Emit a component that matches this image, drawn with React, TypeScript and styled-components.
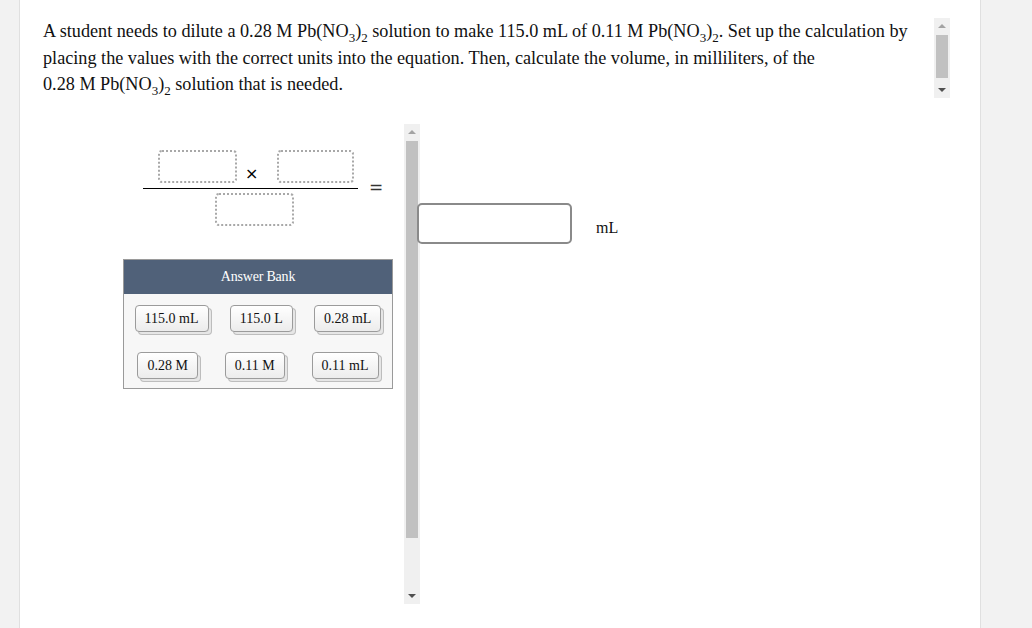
import React from 'react'
import styled, { createGlobalStyle } from 'styled-components'

const GlobalStyle = createGlobalStyle`
  html, body {
    margin: 0;
    padding: 0;
    background: #f2f2f2;
  }
  body {
    font-family: "Liberation Serif", "Times New Roman", serif;
    color: #111;
  }
`

const Page = styled.div`
  display: flex;
  width: 1032px;
  height: 628px;
  overflow: hidden;
`

const Gutter = styled.div<{ $side: 'left' | 'right' }>`
  background: #f2f2f2;
  width: ${p => (p.$side === 'left' ? '19px' : '51px')};
  border-${p => (p.$side === 'left' ? 'right' : 'left')}: 1px solid #e0e0e0;
  flex-shrink: 0;
`

const Main = styled.div`
  width: 960px;
  background: #fff;
  flex-shrink: 0;
`

const PromptRow = styled.div`
  display: flex;
  padding: 18px 0 0 23px;
`

const Prompt = styled.div`
  width: 891px;
  font-size: 18.2px;
  line-height: 26.5px;
  color: #111;

  sub {
    font-size: 13px;
    line-height: 0;
    vertical-align: -5px;
  }
`

const ScrollTrack = styled.div<{ $height: number }>`
  width: 16px;
  height: ${p => p.$height}px;
  background: #f0f0f0;
  display: flex;
  flex-direction: column;
  align-items: center;
  flex-shrink: 0;

  &::before {
    content: '';
    margin-top: 6px;
    border-left: 4px solid transparent;
    border-right: 4px solid transparent;
    border-bottom: 4px solid #a3a3a3;
  }
`

const Thumb = styled.div<{ $top: number; $height: number }>`
  width: 12px;
  margin-top: ${p => p.$top}px;
  height: ${p => p.$height}px;
  background: #c1c1c1;
`

const DownArrow = styled.div`
  margin-top: auto;
  margin-bottom: 6px;
  border-left: 4px solid transparent;
  border-right: 4px solid transparent;
  border-top: 4px solid #505050;
`

const WorkArea = styled.div`
  display: flex;
  margin-top: 26px;
`

const LeftColumn = styled.div`
  width: 270px;
  margin-left: 103px;
  margin-right: 11px;
`

const EquationRow = styled.div`
  display: flex;
  align-items: center;
  padding-top: 26px;
`

const Fraction = styled.div`
  width: 215px;
  margin-left: 20px;
  display: flex;
  flex-direction: column;
  align-items: center;
`

const Numerator = styled.div`
  display: flex;
  align-items: flex-end;
  padding-left: 15px;
  padding-bottom: 5px;
  align-self: stretch;
`

const FractionLine = styled.div`
  align-self: stretch;
  height: 1px;
  background: #000;
`

const Denominator = styled.div`
  padding-top: 4px;
  padding-left: 8px;
`

const DropSlot = styled.div<{ $w: number }>`
  width: ${p => p.$w}px;
  height: 29px;
  border: 2px dotted #a8a8a8;
  border-radius: 4px;
`

const Times = styled.span`
  font-family: "DejaVu Sans", sans-serif;
  font-size: 16px;
  line-height: 15px;
  color: #000;
  margin: 0 19px 0 8px;
  padding-bottom: 2px;
`

const Equals = styled.span`
  font-family: "DejaVu Sans", sans-serif;
  font-size: 17px;
  color: #333;
  margin-left: 11px;
  margin-top: -3px;
`

const Bank = styled.div`
  margin-top: 33px;
  border: 1px solid #9a9a9a;
  background: #f7f7f7;
`

const BankHeader = styled.div`
  height: 34px;
  background: #506179;
  color: #fff;
  font-size: 14px;
  letter-spacing: -0.2px;
  display: flex;
  align-items: center;
  justify-content: center;
`

const BankBody = styled.div`
  display: flex;
  flex-direction: column;
  gap: 20px;
  padding: 11px 0 9px;
`

const BankRow = styled.div`
  display: flex;
  justify-content: space-around;
`

const Chip = styled.div`
  height: 25px;
  padding: 0 9px;
  font-size: 14px;
  display: flex;
  align-items: center;
  border: 1px solid #9b9b9b;
  border-radius: 4px;
  background: linear-gradient(#ffffff, #ececec);
  box-shadow: 3px 3px 0 -1px #e6e6e6, 3px 3px 0 0 #bdbdbd;
  color: #111;
`

const AnswerArea = styled.div`
  display: flex;
  align-items: center;
  margin-top: 79px;
  align-self: flex-start;
`

const AnswerInput = styled.div`
  width: 151px;
  height: 37px;
  margin-left: -3px;
  border: 2px solid #8a8a8a;
  border-radius: 5px;
  background: #fff;
`

const Unit = styled.span`
  font-size: 16px;
  margin-left: 24px;
  padding-top: 9px;
`

const Chem = () => (
  <>
    Pb(NO<sub>3</sub>)<sub>2</sub>
  </>
)

const rows = [
  ['115.0 mL', '115.0 L', '0.28 mL'],
  ['0.28 M', '0.11 M', '0.11 mL'],
]

export default function App() {
  return (
    <>
      <GlobalStyle />
      <Page>
        <Gutter $side="left" />
        <Main>
          <PromptRow>
            <Prompt>
              A student needs to dilute a 0.28 M <Chem /> solution to make 115.0 mL of 0.11 M <Chem />. Set up the
              calculation by<br />
              placing the values with the correct units into the equation. Then, calculate the volume, in
              milliliters, of the<br />
              0.28 M <Chem /> solution that is needed.
            </Prompt>
            <ScrollTrack $height={80}>
              <Thumb $top={7} $height={43} />
              <DownArrow />
            </ScrollTrack>
          </PromptRow>

          <WorkArea>
            <LeftColumn>
              <EquationRow>
                <Fraction>
                  <Numerator>
                    <DropSlot $w={75} />
                    <Times>×</Times>
                    <DropSlot $w={73} />
                  </Numerator>
                  <FractionLine />
                  <Denominator>
                    <DropSlot $w={75} />
                  </Denominator>
                </Fraction>
                <Equals>=</Equals>
              </EquationRow>

              <Bank>
                <BankHeader>Answer Bank</BankHeader>
                <BankBody>
                  {rows.map((row, i) => (
                    <BankRow key={i}>
                      {row.map(v => (
                        <Chip key={v}>{v}</Chip>
                      ))}
                    </BankRow>
                  ))}
                </BankBody>
              </Bank>
            </LeftColumn>

            <ScrollTrack $height={480}>
              <Thumb $top={7} $height={397} />
              <DownArrow />
            </ScrollTrack>

            <AnswerArea>
              <AnswerInput />
              <Unit>mL</Unit>
            </AnswerArea>
          </WorkArea>
        </Main>
        <Gutter $side="right" />
      </Page>
    </>
  )
}
